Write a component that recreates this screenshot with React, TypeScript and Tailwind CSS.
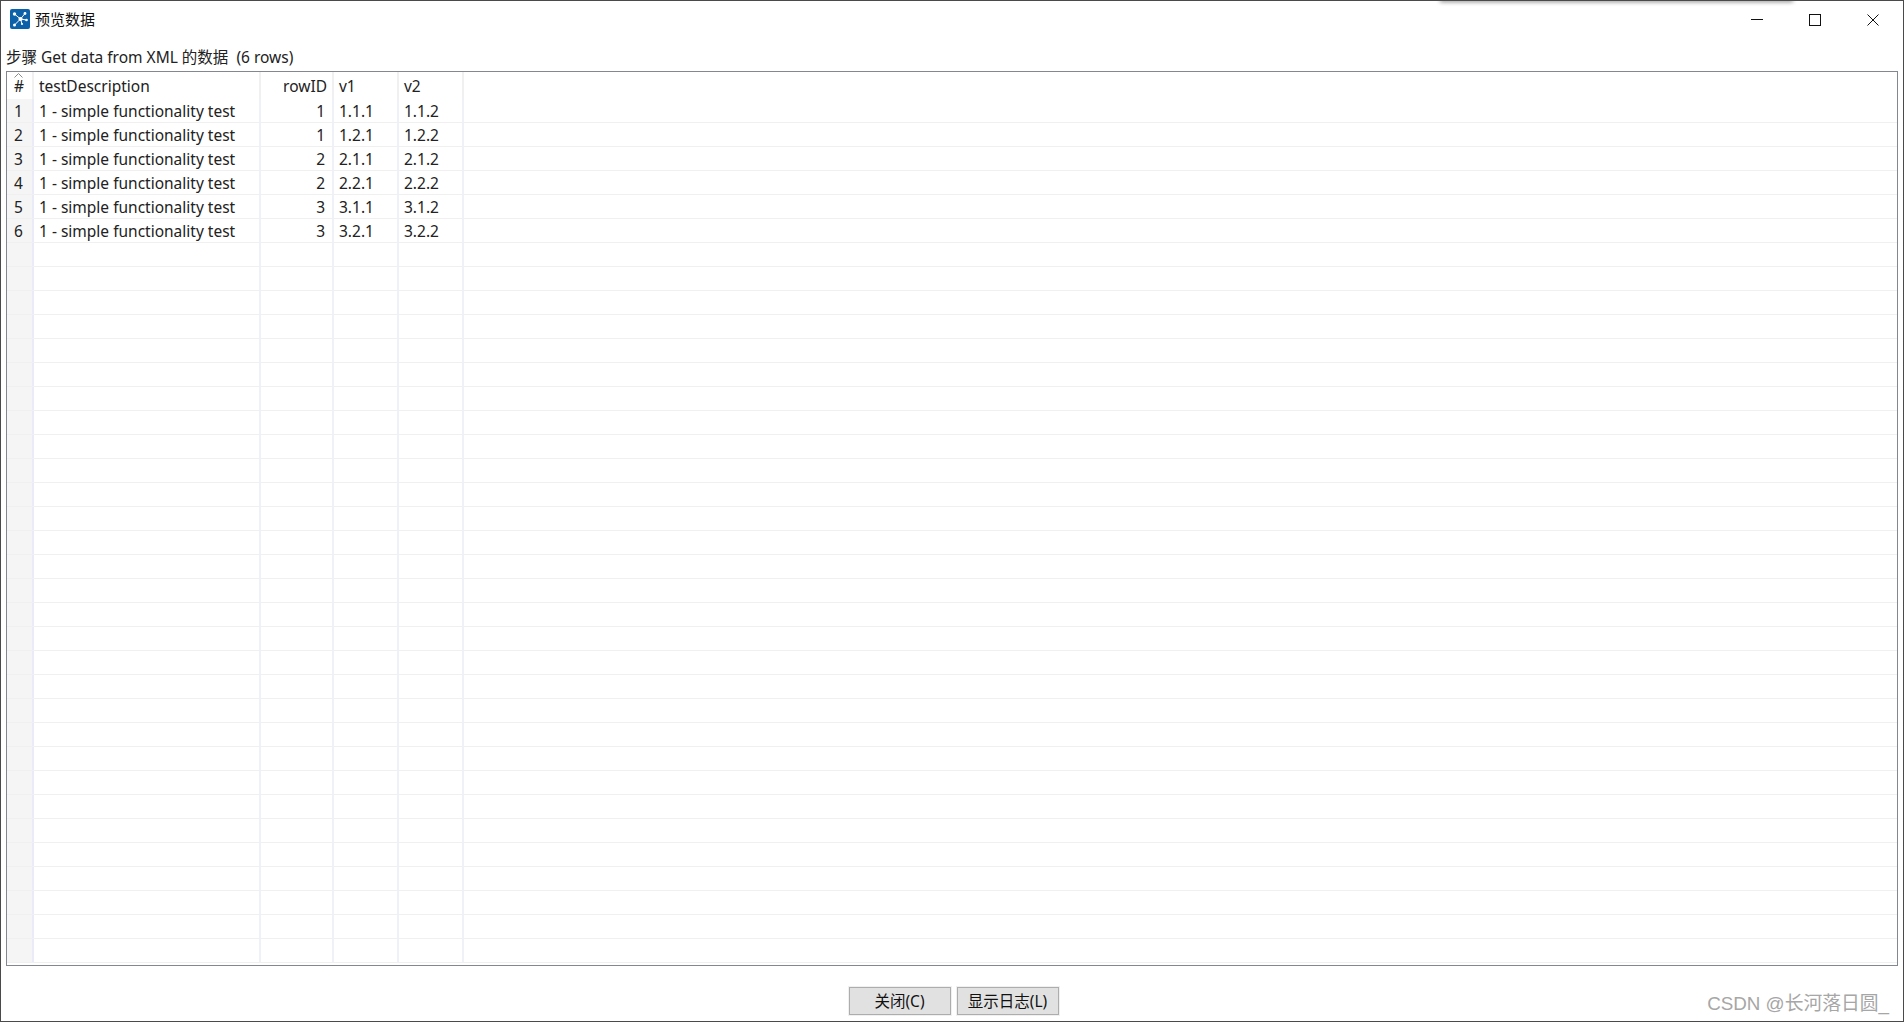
const FONT = '"Noto Sans", "Noto Sans CJK SC", sans-serif';

const rows = [
  ['1', '1 - simple functionality test', '1', '1.1.1', '1.1.2'],
  ['2', '1 - simple functionality test', '1', '1.2.1', '1.2.2'],
  ['3', '1 - simple functionality test', '2', '2.1.1', '2.1.2'],
  ['4', '1 - simple functionality test', '2', '2.2.1', '2.2.2'],
  ['5', '1 - simple functionality test', '3', '3.1.1', '3.1.2'],
  ['6', '1 - simple functionality test', '3', '3.2.1', '3.2.2'],
];

const blankRows = Array.from({ length: 30 }, () => ['', '', '', '', '']);

function AppIcon() {
  return (
    <svg width="20" height="20" viewBox="0 0 20 20" className="shrink-0">
      <rect width="20" height="20" rx="2" fill="#0b62a8" />
      <path d="M10.5 10 4.5 5M10.5 10 15 4.5M10.5 10l6 1M10.5 10l-6 6M10.5 10l1.5 5" stroke="#fff" strokeWidth="1" />
      <g fill="#fff">
        <circle cx="10.5" cy="10" r="2.1" />
        <circle cx="4.5" cy="5" r="1.7" />
        <circle cx="15" cy="4.5" r="1.4" />
        <circle cx="16.5" cy="11" r="1.3" />
        <circle cx="4.5" cy="16" r="1.5" />
        <circle cx="12" cy="15" r="1.1" />
      </g>
    </svg>
  );
}

function Row({ cells }: { cells: string[] }) {
  return (
    <div className="flex h-6 shrink-0 border-b border-[#f0f0f0] text-[15.5px] leading-[24px] text-[#222]">
      <div className="w-[27px] shrink-0 border-r-2 border-[#e9ecf8] bg-[#f5f5f5] pl-[7px]">{cells[0]}</div>
      <div className="w-[227px] shrink-0 border-r-2 border-[#eff1f8] pl-[5px]">{cells[1]}</div>
      <div className="w-[73px] shrink-0 border-r-2 border-[#eff1f8] pr-[7px] text-right">{cells[2]}</div>
      <div className="w-[65px] shrink-0 border-r-2 border-[#eff1f8] pl-[5px]">{cells[3]}</div>
      <div className="w-[65px] shrink-0 border-r-2 border-[#eff1f8] pl-[5px]">{cells[4]}</div>
    </div>
  );
}

export default function App() {
  return (
    <div
      className="relative flex h-[1022px] w-[1904px] flex-col overflow-hidden border border-[#4a4a4a] bg-white"
      style={{ fontFamily: FONT }}
    >
      {/* Title bar */}
      <div className="flex h-[37px] shrink-0 items-center">
        <div className="ml-[9px] mt-[-1px]">
          <AppIcon />
        </div>
        <span className="ml-[5px] text-[15px] text-[#111]">预览数据</span>
        <div className="ml-auto mr-[1px] flex items-center">
          <button className="flex h-[37px] w-[58px] items-center justify-center">
            <svg width="12" height="12" viewBox="0 0 12 12"><path d="M0 5.5h12" stroke="#111" /></svg>
          </button>
          <button className="flex h-[37px] w-[58px] items-center justify-center">
            <svg width="12" height="12" viewBox="0 0 12 12"><rect x=".5" y=".5" width="11" height="11" fill="none" stroke="#111" /></svg>
          </button>
          <button className="flex h-[37px] w-[58px] items-center justify-center">
            <svg width="12" height="12" viewBox="0 0 12 12"><path d="M.5.5l11 11M11.5.5l-11 11" stroke="#111" /></svg>
          </button>
        </div>
      </div>

      {/* Label */}
      <div className="ml-[5px] h-[33px] shrink-0 pt-[9px] text-[15.5px] leading-[20px] whitespace-pre text-[#222]">
        步骤 Get data from XML 的数据  (6 rows)
      </div>

      {/* Table */}
      <div className="mx-[5px] flex h-[895px] shrink-0 flex-col overflow-hidden border border-[#828790]">
        <div className="flex h-[27px] shrink-0 text-[15.5px] leading-[29px] text-[#222]">
          <div className="relative w-[27px] shrink-0 border-r-2 border-[#f0f0f0] pl-[7px]">
            #
            <svg width="9" height="5" viewBox="0 0 9 5" className="absolute left-[7px] top-[1px]">
              <path d="M.5 4.5l4-4 4 4" fill="none" stroke="#8a8a8a" />
            </svg>
          </div>
          <div className="w-[227px] shrink-0 border-r-2 border-[#f0f0f0] pl-[5px]">testDescription</div>
          <div className="w-[73px] shrink-0 border-r-2 border-[#f0f0f0] pr-[5px] text-right">rowID</div>
          <div className="w-[65px] shrink-0 border-r-2 border-[#f0f0f0] pl-[5px]">v1</div>
          <div className="w-[65px] shrink-0 border-r-2 border-[#f0f0f0] pl-[5px]">v2</div>
        </div>
        {rows.concat(blankRows).map((cells, i) => (
          <Row key={i} cells={cells} />
        ))}
      </div>

      {/* Buttons */}
      <div className="mt-[21px] flex justify-center gap-[6px] pl-[3px]">
        <button className="h-[28px] w-[102px] border border-[#adadad] bg-[#e1e1e1] text-[15.5px] leading-[26px] text-[#111] outline outline-[#f0f0f0]">
          关闭(C)
        </button>
        <button className="h-[28px] w-[102px] border border-[#adadad] bg-[#e1e1e1] text-[15.5px] leading-[26px] text-[#111] outline outline-[#f0f0f0]">
          显示日志(L)
        </button>
      </div>

      {/* Overlays: neighbouring window shadow and image watermark */}
      <div className="absolute left-[1439px] top-[-4px] h-[4px] w-[353px] shadow-[0_1px_4px_rgba(0,0,0,0.45)]" />
      <div
        className="absolute right-[14px] top-[991px] text-[18.8px] leading-[24px] text-[#a6a6a6]"
        style={{ fontFamily: '"Liberation Sans", "Noto Sans CJK SC", sans-serif' }}
      >
        CSDN @长河落日圆_
      </div>
    </div>
  );
}
